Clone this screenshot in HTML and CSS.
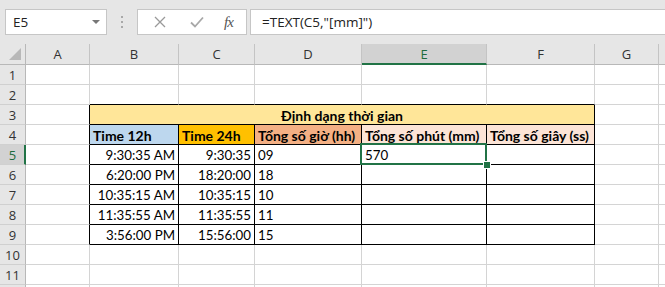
FILE: index.html
```html
<!DOCTYPE html>
<html>
<head>
<meta charset="utf-8">
<link rel="stylesheet" href="styles.css">
</head>
<body>
<div class="app">
  <div class="fbar">
    <div class="namebox"><span class="nb-text">E5</span><span class="nb-arrow"></span></div>
    <div class="grip"><i></i><i></i><i></i></div>
    <div class="fbtns">
      <svg class="ico" width="14" height="14" viewBox="0 0 14 14"><path d="M2 2 L12 12 M12 2 L2 12" stroke="#9a9a9a" stroke-width="1.3" fill="none"/></svg>
      <svg class="ico" width="16" height="14" viewBox="0 0 16 14"><path d="M2 7.5 L6 11.5 L14 2.5" stroke="#a8a8a8" stroke-width="1.8" fill="none"/></svg>
      <span class="fx">fx</span>
    </div>
    <div class="finput">=TEXT(C5,"[mm]")</div>
  </div>
  <div class="sheet">
    <!-- header row -->
    <div class="ch corner"><span class="tri"></span></div>
    <div class="ch">A</div><div class="ch">B</div><div class="ch">C</div><div class="ch">D</div>
    <div class="ch sel">E</div><div class="ch">F</div><div class="ch">G</div><div class="ch last"></div>

    <!-- row 1 -->
    <div class="rh">1</div><div class="c"></div><div class="c"></div><div class="c"></div><div class="c"></div><div class="c"></div><div class="c"></div><div class="c"></div><div class="c"></div>
    <!-- row 2 -->
    <div class="rh">2</div><div class="c"></div><div class="c tb"></div><div class="c tb"></div><div class="c tb"></div><div class="c tb"></div><div class="c tb"></div><div class="c"></div><div class="c"></div>
    <!-- row 3 -->
    <div class="rh">3</div><div class="c tr"></div><div class="c k title">Định dạng thời gian</div><div class="c"></div><div class="c"></div>
    <!-- row 4 -->
    <div class="rh">4</div><div class="c tr"></div>
    <div class="c k hd blue">Time 12h</div>
    <div class="c k hd orange">Time 24h</div>
    <div class="c k hd salmon">Tổng số giờ (hh)</div>
    <div class="c k hd peach">Tổng số phút (mm)</div>
    <div class="c k hd peach">Tổng số giây (ss)</div>
    <div class="c"></div><div class="c"></div>
    <!-- row 5 -->
    <div class="rh rsel">5</div><div class="c tr"></div>
    <div class="c k r">9:30:35 AM</div><div class="c k r">9:30:35</div><div class="c k">09</div>
    <div class="c k active">570<span class="selbox"></span><span class="handle"></span></div>
    <div class="c k"></div><div class="c"></div><div class="c"></div>
    <!-- row 6 -->
    <div class="rh">6</div><div class="c tr"></div>
    <div class="c k r">6:20:00 PM</div><div class="c k r">18:20:00</div><div class="c k">18</div>
    <div class="c k"></div><div class="c k"></div><div class="c"></div><div class="c"></div>
    <!-- row 7 -->
    <div class="rh">7</div><div class="c tr"></div>
    <div class="c k r">10:35:15 AM</div><div class="c k r">10:35:15</div><div class="c k">10</div>
    <div class="c k"></div><div class="c k"></div><div class="c"></div><div class="c"></div>
    <!-- row 8 -->
    <div class="rh">8</div><div class="c tr"></div>
    <div class="c k r">11:35:55 AM</div><div class="c k r">11:35:55</div><div class="c k">11</div>
    <div class="c k"></div><div class="c k"></div><div class="c"></div><div class="c"></div>
    <!-- row 9 -->
    <div class="rh">9</div><div class="c tr"></div>
    <div class="c k r">3:56:00 PM</div><div class="c k r">15:56:00</div><div class="c k">15</div>
    <div class="c k"></div><div class="c k"></div><div class="c"></div><div class="c"></div>
    <!-- row 10 -->
    <div class="rh">10</div><div class="c"></div><div class="c"></div><div class="c"></div><div class="c"></div><div class="c"></div><div class="c"></div><div class="c"></div><div class="c"></div>
    <!-- row 11 -->
    <div class="rh">11</div><div class="c"></div><div class="c"></div><div class="c"></div><div class="c"></div><div class="c"></div><div class="c"></div><div class="c"></div><div class="c"></div>
    <!-- row 12 (only its top edge is visible) -->
    <div class="rh"></div><div class="c"></div><div class="c"></div><div class="c"></div><div class="c"></div><div class="c"></div><div class="c"></div><div class="c"></div><div class="c"></div>
  </div>
</div>
</body>
</html>
```
FILE: styles.css
```css
* { box-sizing: border-box; }
html, body { margin: 0; padding: 0; }
body {
  width: 665px;
  height: 287px;
  overflow: hidden;
  background: #ffffff;
  font-family: Lato, "Liberation Sans", sans-serif;
}
.app { display: flex; flex-direction: column; }

.fbar {
  height: 44px;
  background: #e6e6e6;
  display: flex;
  align-items: flex-start;
  padding-top: 9px;
  padding-left: 5px;
}
.namebox {
  width: 102px;
  height: 26px;
  background: #fff;
  border: 1px solid #c6c6c6;
  display: flex;
  align-items: center;
  justify-content: space-between;
  padding: 0 6px 0 7px;
  font-family: "Open Sans", "Noto Sans", sans-serif;
  font-size: 13.5px;
  color: #222;
}
.nb-arrow {
  width: 0; height: 0;
  border-left: 4px solid transparent;
  border-right: 4px solid transparent;
  border-top: 4px solid #777;
}
.grip {
  width: 30px;
  height: 26px;
  display: flex;
  flex-direction: column;
  align-items: center;
  justify-content: center;
  gap: 3px;
}
.grip i { display: block; width: 2px; height: 2px; background: #a8a8a8; }
.fbtns {
  width: 110px;
  height: 26px;
  background: #fff;
  border: 1px solid #c6c6c6;
  display: flex;
  align-items: center;
  padding-left: 15px;
  gap: 22px;
}
.fbtns .ico { display: block; }
.fx {
  font-family: "Liberation Serif", serif;
  font-style: italic;
  font-size: 15px;
  color: #555;
  letter-spacing: -1px;
  margin-left: -3px;
}
.finput {
  flex: 1;
  height: 26px;
  margin-left: 3px;
  background: #fff;
  border: 1px solid #c6c6c6;
  border-right: none;
  display: flex;
  align-items: center;
  padding-left: 11px;
  font-family: "Open Sans", "Noto Sans", sans-serif;
  font-size: 13.5px;
  color: #222;
}

.sheet {
  display: grid;
  grid-template-columns: 26px 64px 89px 76px 107px 125px 108px 64px 1fr;
  grid-template-rows: 21px repeat(12, 20px);
  font-size: 13.3px;
  color: #000;
}
.ch {
  background: #e6e6e6;
  border-right: 1px solid #c4c4c4;
  border-bottom: 1px solid #b8b8b8;
  display: flex;
  align-items: center;
  justify-content: center;
  font-family: "Open Sans", "Noto Sans", sans-serif;
  font-size: 13px;
  color: #333;
}
.ch.last { border-right: none; }
.ch.corner { position: relative; border-right-color: #b8b8b8; }
.tri {
  position: absolute;
  right: 4px;
  bottom: 4px;
  width: 0; height: 0;
  border-left: 12px solid transparent;
  border-bottom: 12px solid #b8b8b8;
}
.ch.sel {
  background: #d2d2d2;
  color: #1e6b3e;
  border-bottom: 2px solid #217346;
  padding-top: 1px;
}
.rh {
  background: #e6e6e6;
  border-right: 1px solid #b8b8b8;
  border-bottom: 1px solid #d0d0d0;
  display: flex;
  align-items: center;
  justify-content: center;
  font-family: "Open Sans", "Noto Sans", sans-serif;
  font-size: 13px;
  color: #333;
}
.rh.rsel {
  background: #d2d2d2;
  color: #1e6b3e;
  border-right: 2px solid #217346;
  padding-left: 1px;
}
.c {
  border-right: 1px solid #d4d4d4;
  border-bottom: 1px solid #d4d4d4;
  background: #fff;
  display: flex;
  align-items: center;
  padding: 1px 3px 0 3px;
  white-space: nowrap;
}
.c.tb { border-bottom-color: #000; }
.c.tr { border-right-color: #000; }
.c.k { border-right-color: #000; border-bottom-color: #000; }
.c.r { justify-content: flex-end; }
.title {
  grid-column: span 5;
  background: #ffe699;
  font-weight: bold;
  font-size: 14px;
  justify-content: center;
}
.hd { font-weight: bold; font-size: 14px; }
.blue { background: #bdd7ee; }
.orange { background: #ffc000; }
.salmon { background: #f4b084; }
.peach { background: #fce4d6; }
.active { position: relative; }
.selbox {
  position: absolute;
  left: -2px;
  top: -2px;
  width: 127px;
  height: 22px;
  border: 2px solid #217346;
  pointer-events: none;
}
.handle {
  position: absolute;
  right: -4px;
  bottom: -4px;
  width: 6px;
  height: 6px;
  background: #217346;
  outline: 1px solid #fff;
}
```
